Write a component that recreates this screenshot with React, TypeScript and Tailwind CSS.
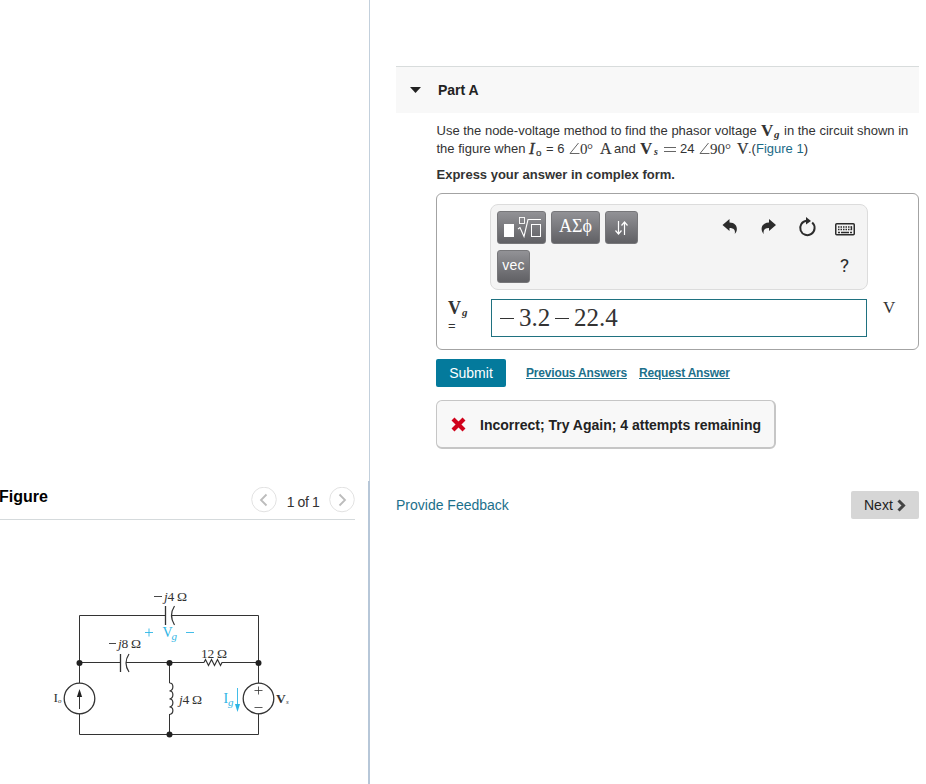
import React from 'react';

const Angle: React.FC = () => (
  <svg className="mt-[3px] block w-[11px] h-[11px]" viewBox="0 0 11 11" fill="none" stroke="#555" strokeWidth="0.9">
    <path d="M9.500 0L1 10.500H10.500" />
  </svg>
);

const Question: React.FC = () => (
  <div className="text-[13px] leading-[18px] text-[#333] whitespace-nowrap">
    <div className="flex h-[18px]">
      <span className="w-[325px] pl-[0.5px]">Use the node-voltage method to find the phasor voltage</span>
      <span className="w-[13px] font-['Liberation_Serif',serif] text-[17px] font-bold leading-[17px]">V</span>
      <span className="w-[9px] pt-[3px] font-['Liberation_Serif',serif] text-[11px] font-bold italic">g</span>
      <span className="pl-px">in the circuit shown in</span>
    </div>
    <div className="flex h-[18px]">
      <span className="w-[93px] pl-[0.5px]">the figure when</span>
      <span className="w-[7px] font-['Liberation_Serif',serif] text-[17px] italic leading-[17px] [-webkit-text-stroke:0.3px]">I</span>
      <span className="w-[10px] pt-[3px] font-['Liberation_Serif',serif] text-[11px] [-webkit-text-stroke:0.2px]">o</span>
      <span className="w-[23px]">= 6</span>
      <span className="w-[11px]"><Angle /></span>
      <span className="w-[7px] font-['Liberation_Serif',serif] text-[15px]">0</span>
      <span className="w-[13px] font-['Liberation_Serif',serif] text-[15px]">°</span>
      <span className="w-[14px] font-['Liberation_Serif',serif] text-[16px] leading-[17px] [-webkit-text-stroke:0.2px]">A</span>
      <span className="w-[26px]">and</span>
      <span className="w-[14px] font-['Liberation_Serif',serif] text-[17px] font-bold leading-[17px]">V</span>
      <span className="w-[10px] pt-[3px] font-['Liberation_Serif',serif] text-[10px] font-bold italic">s</span>
      <span className="w-[16px] pt-[7px]">
        <span className="block h-[5px] w-[12px] border-y border-[#666]" />
      </span>
      <span className="w-[19px]">24</span>
      <span className="w-[10px]"><Angle /></span>
      <span className="w-[16px] pl-px font-['Liberation_Serif',serif] text-[15px]">90</span>
      <span className="w-[12px] font-['Liberation_Serif',serif] text-[15px]">°</span>
      <span className="w-[12px] font-['Liberation_Serif',serif] text-[16px] leading-[17px] [-webkit-text-stroke:0.2px]">V</span>
      <span className="-ml-px">.(<a className="text-[#1a6a87]">Figure 1</a>)</span>
    </div>
  </div>
);

const keyClass =
  'flex h-[33px] items-center justify-center rounded-[3px] border border-[#77777a] bg-linear-to-b from-[#929296] to-[#606064] text-white';

const Toolbar: React.FC = () => (
  <div className="flex h-[86px] w-[378px] justify-between rounded-lg border border-[#dcdcdc] bg-[#f4f4f4] pt-[6px] pl-[6px]">
    <div>
      <div className="flex gap-[5px]">
        <div className={`${keyClass} w-[49px]`}>
          <svg width="40" height="24" viewBox="0 0 40 24" fill="none" stroke="white">
            <rect x="2" y="8" width="10" height="13" fill="white" stroke="none" />
            <rect x="17.5" y="1.5" width="5" height="6" strokeWidth="0.9" />
            <path d="M16 13l2-1.5 4 9L26 3.5H39" strokeWidth="1.1" />
            <rect x="29.5" y="8.5" width="9" height="12" strokeWidth="1" />
          </svg>
        </div>
        <div className={`${keyClass} w-[49px] pb-[2px] font-['Liberation_Serif',serif] text-[18px]`}>ΑΣϕ</div>
        <div className={`${keyClass} w-[33px]`}>
          <svg width="15" height="18" viewBox="0 0 15 18" fill="none" stroke="white" strokeWidth="1.2">
            <path d="M4.5 2v13M1.5 11.5l3 3.5 3-3.5M10.5 16V3M7.5 6.5l3-3.5 3 3.5" />
          </svg>
        </div>
      </div>
      <div className={`${keyClass} mt-[6px] w-[33px] pb-[2px] text-[14px] tracking-[0.3px]`}>vec</div>
    </div>
    <div className="w-[146px] pt-[4px] text-[#2c2c2c]">
      <div className="flex h-[26px] gap-[20px]">
        <svg width="18" height="26" viewBox="0 0 18 26" fill="currentColor">
          <path d="M1.500 10L8.500 4v3.500c5 0 8 3.500 7.300 7.500-.3 1.800-1 2.800-2 4 .8-4-1-6-5.300-6V16z" />
        </svg>
        <svg width="18" height="26" viewBox="0 0 18 26" fill="currentColor">
          <path d="M17 10L10 4v3.500c-5 0-8 3.500-7.300 7.500.3 1.800 1 2.800 2 4-.8-4 1-6 5.300-6V16z" />
        </svg>
        <svg width="20" height="26" viewBox="0 0 20 26" fill="none" stroke="currentColor" strokeWidth="2">
          <path d="M15.200 7.600A7.200 7.200 0 1 1 9.500 5.800" />
          <path d="M9 2L14 6 9 9.500z" fill="currentColor" stroke="none" />
        </svg>
        <svg className="-ml-[2px]" width="20" height="26" viewBox="0 0 20 26" fill="none" stroke="currentColor">
          <rect x="0.750" y="8.750" width="18.500" height="11" rx="1" strokeWidth="1.500" />
          <path d="M3 12h14M3 14.500h14" strokeWidth="1.300" strokeDasharray="1.500 1" />
          <path d="M3 17.500h2M6 17.500h8M15 17.500h2M16.500 11.500v3.500" strokeWidth="1.300" />
        </svg>
      </div>
      <div className="mt-[14px] ml-[119px] font-[Roboto,sans-serif] text-[19px] leading-[22px]">?</div>
    </div>
  </div>
);

const AnswerBox: React.FC = () => (
  <div className="flex h-[157px] w-[483px] rounded-[6px] border border-[#a3a3a3]">
    <div className="w-[53px] pt-[105px] pl-[11px] text-[#333]">
      <div className="flex h-[20px] font-['Liberation_Serif',serif]">
        <span className="w-[14px] text-[18px] font-bold leading-[18px]">V</span>
        <span className="pt-[5px] text-[11px] font-bold italic leading-[16px]">g</span>
      </div>
      <div className="text-[13px] leading-[14px]">=</div>
    </div>
    <div className="pt-[10px]">
      <Toolbar />
      <div className="mt-[9px] ml-px flex h-[38px] w-[376px] items-center border border-[#1f7180] pl-[8px] font-['Liberation_Serif',serif] text-[25px] text-[#333]">
        <span className="h-px w-[14px] bg-[#333]" />
        <span className="ml-[5px] w-[33px]">3.2</span>
        <span className="ml-[3px] h-px w-[14px] bg-[#333]" />
        <span className="ml-[5px]">22.4</span>
      </div>
    </div>
    <div className="pt-[104px] pl-[15px] font-['Liberation_Serif',serif] text-[17px] leading-[20px] text-[#333]">V</div>
  </div>
);

const Circuit: React.FC = () => (
  <svg className="block" width="368" height="264" viewBox="0 520 368 264" fill="none" stroke="#333" strokeWidth="1">
    <path d="M79.500 683V615.500H165.500M171.500 615.500H258.500V683M79.500 713.500V734.500H258.500V713.500" />
    <path d="M79.500 662.500H120.500M126 662.500H169.500V683M169.500 662.500H204M224 662.500H258.500M169.500 714V734.500" />
    <path d="M165.500 606V625M120.500 654V672" strokeWidth="1.300" />
    <path d="M174.500 606Q168.500 615.500 174.500 625M129 654Q123 663 129 672" strokeWidth="1.200" />
    <path d="M204 662.500l1.500-3 3 6 3-6 3 6 3-6 3 6 1.500-3h2" strokeWidth="1.200" />
    <path d="M169.500 683c4.500 0 4.500 7 0 8c4.500 0 4.500 7 0 8c4.500 0 4.500 7 0 8c4.500 0 4.500 7 0 7.500" strokeWidth="1.200" />
    <circle cx="79.500" cy="698.500" r="15.300" strokeWidth="1.300" />
    <circle cx="258.500" cy="698.500" r="15.300" strokeWidth="1.300" />
    <path d="M79.500 709V694" />
    <path d="M79.500 689l2.600 8h-5.200z" fill="#222" stroke="none" />
    <g fill="#222" stroke="none">
      <circle cx="79.500" cy="663" r="3" />
      <circle cx="169.500" cy="663" r="3" />
      <circle cx="258.500" cy="663" r="3" />
      <circle cx="169.500" cy="734.500" r="3" />
    </g>
    <path d="M254.500 690.500h8M258.500 686.500v8M254.500 707.500h8" strokeWidth="0.800" />
    <path d="M154 596.500h8M109 643.500h7" strokeWidth="0.900" />
    <g stroke="#2eb5e5" strokeWidth="0.900">
      <path d="M145 632.500h8M149 628.500v8M186 632.500h8M237.500 688v16" />
      <path d="M235 704h5l-2.500 8z" fill="#2eb5e5" stroke="none" />
    </g>
    <g fill="#333" stroke="none" className="font-['Liberation_Serif',serif] text-[13.500px]">
      <text x="164" y="600.500" textLength="23"><tspan fontStyle="italic">j</tspan>4 Ω</text>
      <text x="118" y="648" textLength="23"><tspan fontStyle="italic">j</tspan>8 Ω</text>
      <text x="201" y="658" textLength="26">12 Ω</text>
      <text x="179" y="703.500" textLength="23"><tspan fontStyle="italic">j</tspan>4 Ω</text>
      <text x="53.500" y="702">I</text>
      <text x="58" y="702.500" className="text-[7px] italic">o</text>
      <text x="276" y="703" fontWeight="bold">V</text>
      <text x="286" y="704" className="text-[7px] italic">s</text>
    </g>
    <g fill="#2eb5e5" stroke="none" className="font-['Liberation_Serif',serif] text-[14px]">
      <text x="162.500" y="637">V</text>
      <text x="171.500" y="640" fontStyle="italic" className="text-[11px]">g</text>
      <text x="223.500" y="703">I</text>
      <text x="228" y="706" fontStyle="italic" className="text-[11px]">g</text>
    </g>
  </svg>
);

const PagerButton: React.FC<{ next?: boolean }> = ({ next }) => (
  <svg width="26" height="26" viewBox="0 0 26 26" fill="none">
    <circle cx="13" cy="12.500" r="12.300" stroke="#e2e2e2" />
    <path d={next ? 'M10.500 7.500l5.500 5.500-5.500 5.500' : 'M15.500 7.500L10 13l5.500 5.500'} stroke="#bcbcbc" strokeWidth="1.800" />
  </svg>
);

const FigurePanel: React.FC = () => (
  <div className="w-[370px] shrink-0">
    <div className="h-[481px] border-r border-[#c3d0dc]" />
    <div className="h-[303px] border-r-2 border-[#b7c7d8]">
      <div className="flex h-[39px] w-[355px] justify-between border-b border-[#d5dadc]">
        <h2 className="mt-[6px] -ml-px text-[16px] font-bold leading-[20px] text-black">Figure</h2>
        <div className="flex pt-[6px] text-[#333]">
          <PagerButton />
          <span className="w-[52px] pt-[5px] text-center text-[14px] leading-[20px] tracking-[-0.4px]">1 of 1</span>
          <PagerButton next />
        </div>
      </div>
      <Circuit />
    </div>
  </div>
);

const App: React.FC = () => {
  return (
    <div className="flex h-[784px] w-[926px] overflow-hidden bg-white font-['Liberation_Sans',Arial,sans-serif]">
      <FigurePanel />
      <div className="w-[549px] pt-[66px] pl-[26px]">
        <div className="flex h-[47px] items-center border-t border-[#d8dcdc] bg-[#f8f8f8] pl-[14px] text-[#222]">
          <svg width="11" height="6" viewBox="0 0 11 6" fill="currentColor">
            <path d="M0 0h11L5.500 6z" />
          </svg>
          <h3 className="ml-[17px] text-[14px] font-bold">Part A</h3>
        </div>
        <div className="pt-[9px] pl-[40px]">
          <Question />
          <p className="mt-[8px] mb-[10px] pl-[0.5px] text-[13px] font-bold leading-[17px] text-[#333]">Express your answer in complex form.</p>
          <AnswerBox />
          <div className="mt-[9px] flex h-[28px] items-center">
            <button className="h-[28px] w-[70px] rounded-[2px] bg-[#047a9c] text-[14px] text-white">Submit</button>
            <a className="ml-[20px] w-[101px] whitespace-nowrap text-[12px] font-bold tracking-[-0.17px] text-[#1c708b] underline">Previous Answers</a>
            <a className="ml-[12px] whitespace-nowrap text-[12px] font-bold tracking-[-0.2px] text-[#1c708b] underline">Request Answer</a>
          </div>
          <div className="mt-[13px] flex h-[49px] w-[340px] items-center rounded-[6px] border border-r-2 border-b-2 border-[#c6c6c6] bg-[#f8f8f8] pl-[14px]">
            <svg width="15" height="15" viewBox="0 0 15 15" fill="none" stroke="#d0021b" strokeWidth="4.200">
              <path d="M2 2l11 11M13 2L2 13" />
            </svg>
            <span className="ml-[14px] mt-px whitespace-nowrap text-[14px] font-bold leading-[18px] text-[#222]">Incorrect; Try Again; 4 attempts remaining</span>
          </div>
        </div>
        <div className="mt-[42px] flex items-center justify-between">
          <a className="text-[14px] text-[#1c708b]">Provide Feedback</a>
          <button className="flex h-[28px] w-[68px] items-center rounded-[2px] bg-[#d6d6d6] pl-[13px] text-[14px] text-[#222]">
            Next
            <svg className="ml-[4px]" width="9" height="13" viewBox="0 0 9 13" fill="none" stroke="#444" strokeWidth="3">
              <path d="M1.500 1.500l5 5-5 5" />
            </svg>
          </button>
        </div>
      </div>
    </div>
  );
};

export default App;
